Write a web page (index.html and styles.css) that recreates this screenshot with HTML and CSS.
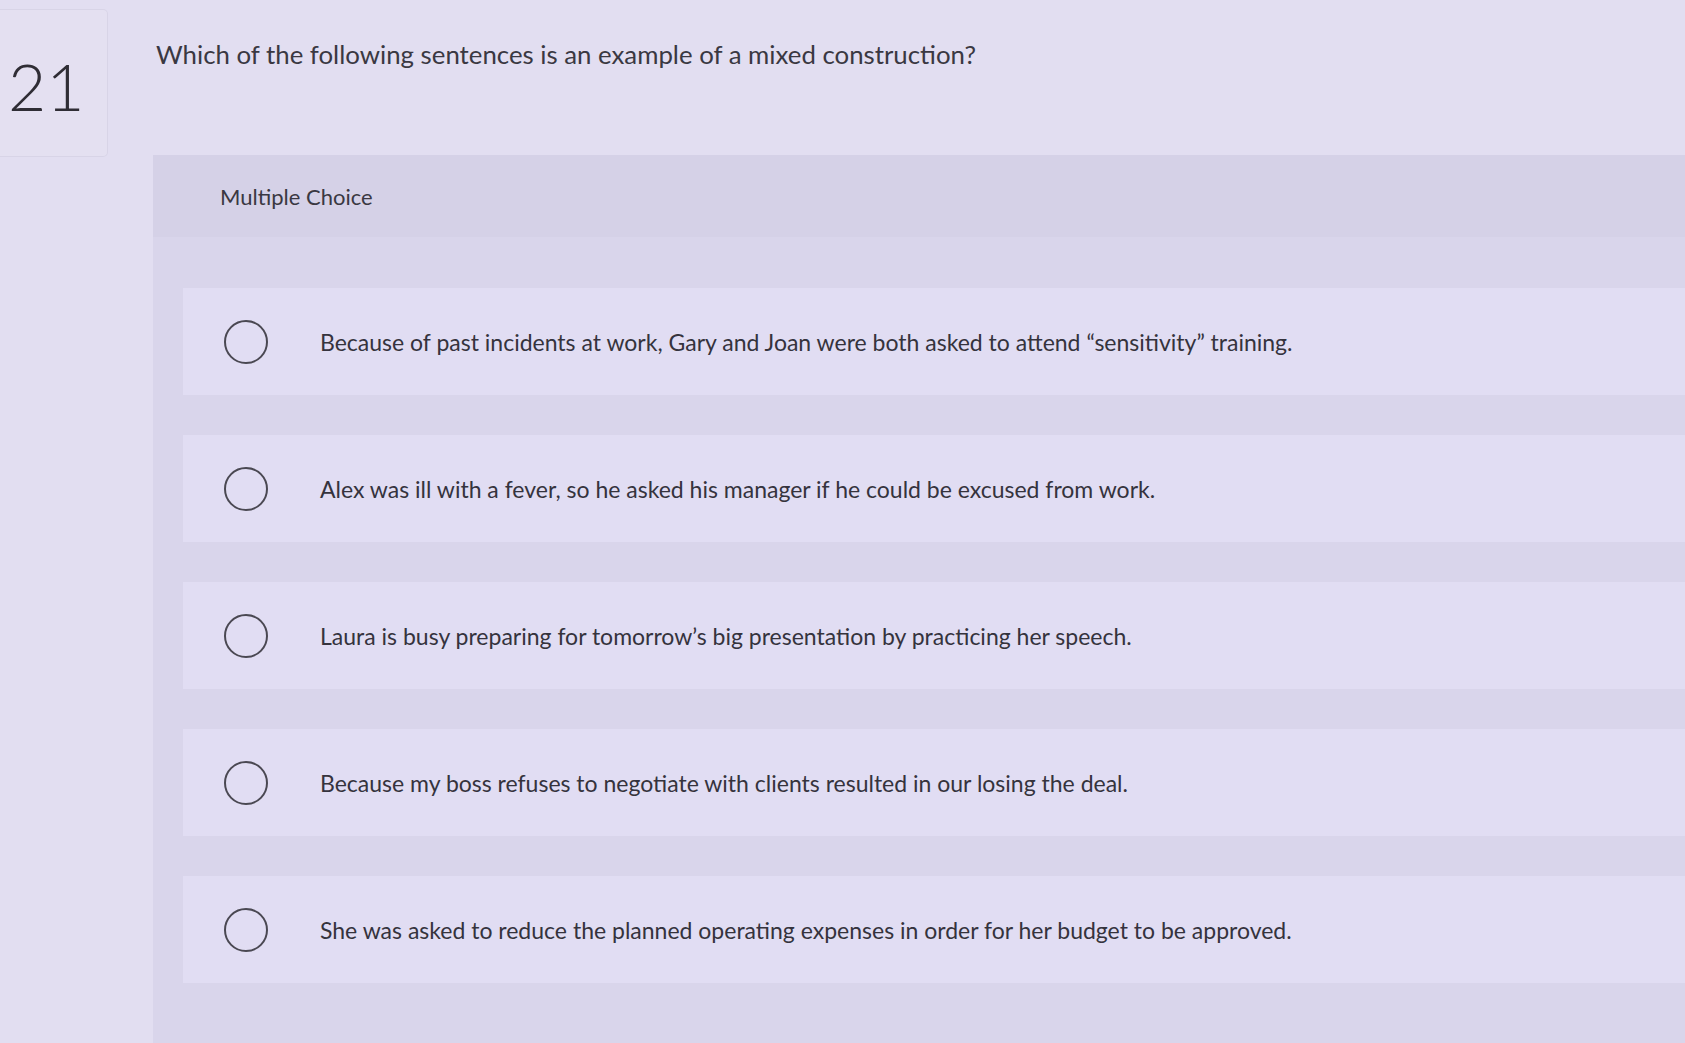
FILE: index.html
```html
<!DOCTYPE html>
<html lang="en">
<head>
<meta charset="utf-8">
<title>Question 21</title>
<link rel="stylesheet" href="styles.css">
</head>
<body>
<div class="page">
  <div class="top">
    <div class="qnum">21</div>
    <div class="qtext">Which of the following sentences is an example of a mixed construction?</div>
  </div>
  <div class="question">
    <div class="qtype">Multiple Choice</div>
    <div class="options">
      <label class="option"><span class="radio"></span><span class="otext">Because of past incidents at work, Gary and Joan were both asked to attend “sensitivity” training.</span></label>
      <label class="option"><span class="radio"></span><span class="otext">Alex was ill with a fever, so he asked his manager if he could be excused from work.</span></label>
      <label class="option"><span class="radio"></span><span class="otext">Laura is busy preparing for tomorrow’s big presentation by practicing her speech.</span></label>
      <label class="option"><span class="radio"></span><span class="otext">Because my boss refuses to negotiate with clients resulted in our losing the deal.</span></label>
      <label class="option"><span class="radio"></span><span class="otext">She was asked to reduce the planned operating expenses in order for her budget to be approved.</span></label>
    </div>
  </div>
</div>
</body>
</html>
```

FILE: styles.css
```css
html, body {
  margin: 0;
  padding: 0;
}
body {
  background: #e2def1;
  font-family: Lato, "Open Sans", "Liberation Sans", sans-serif;
  color: #35333d;
  width: 1685px;
  height: 1043px;
  overflow: hidden;
}
.page {
  display: flex;
  flex-direction: column;
}
.top {
  display: flex;
  align-items: flex-start;
  height: 155px;
}
.qnum {
  box-sizing: border-box;
  margin-top: 9px;
  width: 108px;
  height: 148px;
  background: #e4e0f1;
  border: 1px solid #d8d4e7;
  border-left: none;
  border-radius: 0 5px 5px 0;
  font-size: 66px;
  font-weight: 300;
  line-height: 1;
  padding: 43px 0 0 8px;
  color: #2f2d35;
}
.qtext {
  margin-left: 48px;
  margin-top: 38px;
  font-size: 25.8px;
  line-height: 32px;
  color: #3a3842;
}
.question {
  margin-left: 153px;
  background: #d9d5eb;
  height: 888px;
}
.qtype {
  height: 82px;
  background: #d5d1e7;
  display: flex;
  align-items: center;
  padding-left: 67px;
  font-size: 22px;
  color: #3a3842;
}
.options {
  display: flex;
  flex-direction: column;
  gap: 40px;
  padding-top: 51px;
  padding-left: 30px;
}
.option {
  height: 107px;
  background: #e1ddf3;
  display: flex;
  align-items: center;
  padding-left: 41px;
}
.radio {
  box-sizing: border-box;
  width: 44px;
  height: 44px;
  border: 2px solid #4a4852;
  border-radius: 50%;
  flex: none;
}
.otext {
  margin-left: 52px;
  font-size: 23px;
  color: #35333d;
}
```
